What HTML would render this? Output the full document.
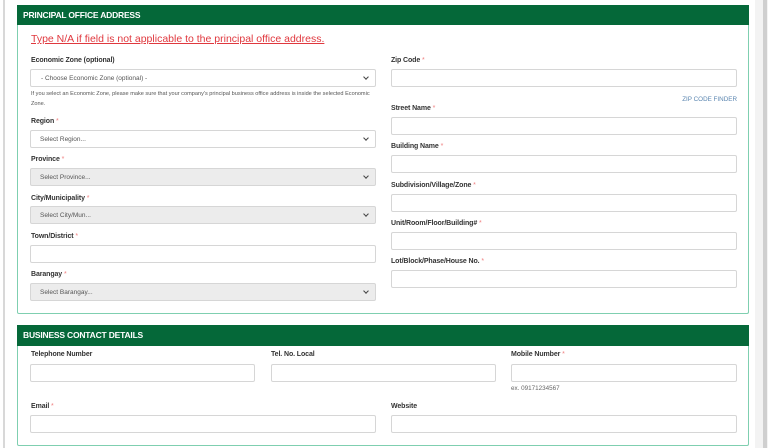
<!DOCTYPE html>
<html><head><meta charset="utf-8"><style>
*{box-sizing:border-box;margin:0;padding:0}
body{width:768px;height:448px;background:#fff;position:relative;overflow:hidden;font-family:"Liberation Sans",sans-serif;}
.a{position:absolute}
.hd{position:absolute;left:17px;width:732px;background:#056839;color:#fff;font-weight:bold;font-size:8.5px;padding-left:6px;letter-spacing:-0.2px}
.pn{position:absolute;left:17px;width:732px;border:1px solid #7fcfb0;border-top:none;border-radius:0 0 2px 2px}
.lb{position:absolute;font-size:7px;font-weight:bold;color:#333;letter-spacing:-0.1px}
.lb i{color:#f08080;font-style:normal;font-weight:normal}
.in{position:absolute;height:18px;border:1px solid #d6d6d6;background:#fff;border-radius:2px}
.sel{position:absolute;height:18px;border:1px solid #d6d6d6;background:#fff;font-size:6.5px;color:#555;padding:5px 0 0 9px;border-radius:2px}
.sel.g{background:#ececec}
.sel:after{content:"";position:absolute;right:7px;top:5px;width:3px;height:3px;border-right:1.2px solid #444;border-bottom:1.2px solid #444;transform:rotate(45deg)}
</style></head><body>
<div class="a" style="left:3px;top:0;width:2px;height:448px;background:#d8d8d8"></div>
<div class="a" style="left:755px;top:0;width:13px;height:448px;background:#f3f3f3"></div>
<div class="a" style="left:763px;top:0;width:4px;height:448px;background:#cfcfcf"></div>

<div class="hd" style="top:5px;height:20px;line-height:20px">PRINCIPAL OFFICE ADDRESS</div>
<div class="pn" style="top:25px;height:289px"></div>
<div class="a" style="left:31px;top:33px;font-size:10.5px;color:#e0383e;text-decoration:underline">Type N/A if field is not applicable to the principal office address.</div>

<div class="lb" style="left:31px;top:57px">Economic Zone (optional)</div>
<div class="sel" style="left:30px;top:69px;width:346px;padding-left:10px">- Choose Economic Zone (optional) -</div>
<div class="a" style="left:31px;top:89px;font-size:5.6px;color:#555;line-height:10px;width:346px">If you select an Economic Zone, please make sure that your company's principal business office address is inside the selected Economic Zone.</div>
<div class="lb" style="left:31px;top:118px">Region <i>*</i></div>
<div class="sel" style="left:30px;top:130px;width:346px">Select Region...</div>
<div class="lb" style="left:31px;top:156px">Province <i>*</i></div>
<div class="sel g" style="left:30px;top:168px;width:346px">Select Province...</div>
<div class="lb" style="left:31px;top:195px">City/Municipality <i>*</i></div>
<div class="sel g" style="left:30px;top:206px;width:346px">Select City/Mun...</div>
<div class="lb" style="left:31px;top:233px">Town/District <i>*</i></div>
<div class="in" style="left:30px;top:245px;width:346px"></div>
<div class="lb" style="left:31px;top:271px">Barangay <i>*</i></div>
<div class="sel g" style="left:30px;top:283px;width:346px">Select Barangay...</div>

<div class="lb" style="left:391px;top:57px">Zip Code <i>*</i></div>
<div class="in" style="left:391px;top:69px;width:346px"></div>
<div class="a" style="left:600px;width:137px;text-align:right;top:96px;font-size:6.3px;color:#5b86b0">ZIP CODE FINDER</div>
<div class="lb" style="left:391px;top:105px">Street Name <i>*</i></div>
<div class="in" style="left:391px;top:117px;width:346px"></div>
<div class="lb" style="left:391px;top:143px">Building Name <i>*</i></div>
<div class="in" style="left:391px;top:155px;width:346px"></div>
<div class="lb" style="left:391px;top:182px">Subdivision/Village/Zone <i>*</i></div>
<div class="in" style="left:391px;top:194px;width:346px"></div>
<div class="lb" style="left:391px;top:220px">Unit/Room/Floor/Building# <i>*</i></div>
<div class="in" style="left:391px;top:232px;width:346px"></div>
<div class="lb" style="left:391px;top:258px">Lot/Block/Phase/House No. <i>*</i></div>
<div class="in" style="left:391px;top:270px;width:346px"></div>

<div class="hd" style="top:325px;height:21px;line-height:21px">BUSINESS CONTACT DETAILS</div>
<div class="pn" style="top:346px;height:100px"></div>
<div class="lb" style="left:31px;top:351px">Telephone Number</div>
<div class="in" style="left:30px;top:364px;width:225px"></div>
<div class="lb" style="left:271px;top:351px">Tel. No. Local</div>
<div class="in" style="left:271px;top:364px;width:225px"></div>
<div class="lb" style="left:511px;top:351px">Mobile Number <i>*</i></div>
<div class="in" style="left:511px;top:364px;width:226px"></div>
<div class="a" style="left:511px;top:385px;font-size:6.3px;color:#666">ex. 09171234567</div>
<div class="lb" style="left:31px;top:403px">Email <i>*</i></div>
<div class="in" style="left:30px;top:415px;width:346px"></div>
<div class="lb" style="left:391px;top:403px">Website</div>
<div class="in" style="left:391px;top:415px;width:346px"></div>
</body></html>
